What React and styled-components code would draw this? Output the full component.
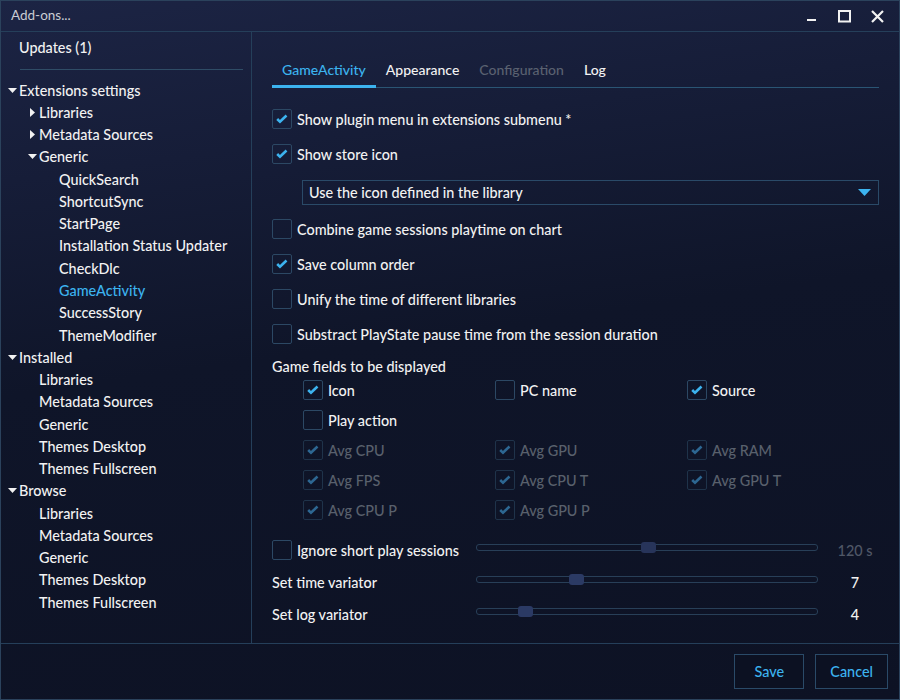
import React from "react";
import styled, { createGlobalStyle, css } from "styled-components";

const GlobalStyle = createGlobalStyle`
  html, body { margin: 0; padding: 0; background: #0d1224; }
  body { font-family: "Lato", "Open Sans", sans-serif; font-size: 14.4px; font-weight: 500; color: #f2f2f2; }
  * { box-sizing: border-box; }
`;

const BLUE = "#3cb3ef";
const LINE = "#253f5a";

const Window = styled.div`
  width: 900px;
  height: 700px;
  border: 1px solid #2b425c;
  background: linear-gradient(172deg, #1c2444 0%, #161d38 22%, #0f1529 48%, #0d1224 100%);
  display: flex;
  flex-direction: column;
  overflow: hidden;
`;

const TitleBar = styled.div`
  height: 31px;
  flex: none;
  border-bottom: 1px solid ${LINE};
  display: flex;
  align-items: center;
  padding: 0 5px 0 10px;
`;

const Title = styled.div`
  flex: 1;
  color: #c9ccd3;
  font-size: 13.5px;
  font-weight: 400;
  margin-top: -2px;
`;

const WinButton = styled.div`
  width: 33px;
  height: 30px;
  display: flex;
  align-items: center;
  justify-content: center;
`;

const Body = styled.div`
  flex: 1;
  display: flex;
  min-height: 0;
`;

const Sidebar = styled.div`
  width: 251px;
  flex: none;
  border-right: 1px solid ${LINE};
  padding-top: 5px;
`;

const Updates = styled.div`
  height: 22px;
  line-height: 22px;
  padding-left: 18px;
`;

const Separator = styled.div`
  height: 1px;
  background: #2f4c66;
  margin: 10px 8px 9px 19px;
`;

const TreeRow = styled.div`
  height: 22.27px;
  display: flex;
  align-items: center;
  padding-left: ${(p) => 7 + p.$level * 20}px;
  color: ${(p) => (p.$selected ? BLUE : "#f2f2f2")};
  white-space: nowrap;
`;

const Toggle = styled.span`
  width: 11px;
  flex: none;
  display: flex;
  align-items: center;
`;

const Main = styled.div`
  flex: 1;
  padding: 19px 20px 0 20px;
  display: flex;
  flex-direction: column;
`;

const TabBar = styled.div`
  display: flex;
  border-bottom: 1px solid #2a5574;
  height: 37px;
`;

const Tab = styled.div`
  padding: 0 10px;
  font-size: 14px;
  display: flex;
  align-items: center;
  margin-bottom: -1px;
  border-bottom: 3px solid transparent;
  padding-top: 3px;
  color: #f2f2f2;
  ${(p) =>
    p.$active &&
    css`
      color: ${BLUE};
      border-bottom-color: ${BLUE};
    `}
  ${(p) =>
    p.$disabled &&
    css`
      color: #5a6170;
    `}
`;

const Row = styled.div`
  display: flex;
  align-items: center;
  gap: 5px;
  height: 20px;
  margin-top: ${(p) => p.$mt ?? 15}px;
  color: ${(p) => (p.$disabled ? "#59606c" : "#f2f2f2")};
  white-space: nowrap;
`;

const Box = styled.span`
  width: 20px;
  height: 20px;
  flex: none;
  border: 1px solid ${(p) => (p.$disabled ? "#1f334a" : "#2c4864")};
  border-radius: 2px;
  display: flex;
  align-items: center;
  justify-content: center;
`;

const Select = styled.div`
  margin: 16px 0 0 30px;
  height: 25px;
  border: 1px solid #2a4a68;
  display: flex;
  align-items: center;
  justify-content: space-between;
  padding: 0 7px 0 6px;
`;

const SectionLabel = styled.div`
  margin-top: 13px;
  height: 20px;
  line-height: 20px;
`;

const FieldGrid = styled.div`
  display: grid;
  grid-template-columns: 192px 192px 1fr;
  row-gap: 10px;
  margin: 3px 0 0 31px;
  & > ${Row} {
    margin-top: 0;
  }
`;

const SliderRow = styled.div`
  display: flex;
  align-items: center;
  height: 20px;
  margin-top: ${(p) => p.$mt ?? 12}px;
  white-space: nowrap;
`;

const SliderLabel = styled.div`
  width: 204px;
  flex: none;
  display: flex;
  align-items: center;
  gap: 5px;
`;

const Track = styled.div`
  position: relative;
  width: 342px;
  height: 7px;
  flex: none;
  border: 1px solid #283f58;
  border-radius: 3px;
  margin-top: -5px;
`;

const Thumb = styled.div`
  position: absolute;
  top: -3px;
  width: 15px;
  height: 11px;
  margin-left: -7px;
  border-radius: 3px;
  background: ${(p) => (p.$disabled ? "#27345a" : "#2b3a64")};
`;

const SliderValue = styled.div`
  flex: 1;
  padding-left: 13px;
  text-align: center;
  color: ${(p) => (p.$disabled ? "#505766" : "#f2f2f2")};
`;

const Footer = styled.div`
  height: 56px;
  flex: none;
  border-top: 1px solid ${LINE};
  display: flex;
  align-items: center;
  justify-content: flex-end;
  gap: 11px;
  padding: 0 11px 0 0;
`;

const Button = styled.button`
  height: 35px;
  min-width: 70px;
  padding: 0 14px;
  border: 1px solid #2a4a68;
  background: #0c1122;
  color: ${BLUE};
  font-family: inherit;
  font-weight: inherit;
  font-size: 14.4px;
`;

const Check = ({ disabled }) => (
  <svg width="12" height="10" viewBox="0 0 12 10">
    <polyline
      points="1.2,5 4,7.8 10.5,1.5"
      fill="none"
      stroke={disabled ? "#2d6792" : BLUE}
      strokeWidth="2.6"
      strokeLinecap="butt"
      strokeLinejoin="miter"
    />
  </svg>
);

const CheckBox = ({ checked, disabled }) => (
  <Box $disabled={disabled}>{checked && <Check disabled={disabled} />}</Box>
);

const Arrow = ({ dir }) =>
  dir === "down" ? (
    <svg width="9" height="5" viewBox="0 0 9 5">
      <polygon points="0,0 9,0 4.5,5" fill="#f2f2f2" />
    </svg>
  ) : (
    <svg width="8" height="9" viewBox="0 0 8 9" style={{ display: "block" }}>
      <polygon points="2,0 7,4.5 2,9" fill="#f2f2f2" />
    </svg>
  );

const tree = [
  { l: 0, t: "Extensions settings", a: "down" },
  { l: 1, t: "Libraries", a: "right" },
  { l: 1, t: "Metadata Sources", a: "right" },
  { l: 1, t: "Generic", a: "down" },
  { l: 2, t: "QuickSearch" },
  { l: 2, t: "ShortcutSync" },
  { l: 2, t: "StartPage" },
  { l: 2, t: "Installation Status Updater" },
  { l: 2, t: "CheckDlc" },
  { l: 2, t: "GameActivity", s: true },
  { l: 2, t: "SuccessStory" },
  { l: 2, t: "ThemeModifier" },
  { l: 0, t: "Installed", a: "down" },
  { l: 1, t: "Libraries" },
  { l: 1, t: "Metadata Sources" },
  { l: 1, t: "Generic" },
  { l: 1, t: "Themes Desktop" },
  { l: 1, t: "Themes Fullscreen" },
  { l: 0, t: "Browse", a: "down" },
  { l: 1, t: "Libraries" },
  { l: 1, t: "Metadata Sources" },
  { l: 1, t: "Generic" },
  { l: 1, t: "Themes Desktop" },
  { l: 1, t: "Themes Fullscreen" },
];

const options = [
  { t: "Combine game sessions playtime on chart", c: false, mt: 14 },
  { t: "Save column order", c: true },
  { t: "Unify the time of different libraries", c: false },
  { t: "Substract PlayState pause time from the session duration", c: false },
];

const fields = [
  { t: "Icon", c: true },
  { t: "PC name", c: false },
  { t: "Source", c: true },
  { t: "Play action", c: false },
  null,
  null,
  { t: "Avg CPU", c: true, d: true },
  { t: "Avg GPU", c: true, d: true },
  { t: "Avg RAM", c: true, d: true },
  { t: "Avg FPS", c: true, d: true },
  { t: "Avg CPU T", c: true, d: true },
  { t: "Avg GPU T", c: true, d: true },
  { t: "Avg CPU P", c: true, d: true },
  { t: "Avg GPU P", c: true, d: true },
];

const sliders = [
  { t: "Ignore short play sessions", box: true, v: "120 s", p: 50.3, d: true, mt: 20 },
  { t: "Set time variator", v: "7", p: 29.2 },
  { t: "Set log variator", v: "4", p: 14 },
];

export default function App() {
  return (
    <>
      <GlobalStyle />
      <Window>
        <TitleBar>
          <Title>Add-ons...</Title>
          <WinButton>
            <svg width="10" height="20" viewBox="0 0 10 20">
              <rect x="0" y="13" width="9" height="2" fill="#f2f2f2" />
            </svg>
          </WinButton>
          <WinButton>
            <svg width="13" height="13" viewBox="0 0 13 13">
              <rect x="1" y="1" width="11" height="10.5" fill="none" stroke="#f2f2f2" strokeWidth="2" />
            </svg>
          </WinButton>
          <WinButton>
            <svg width="13" height="13" viewBox="0 0 13 13">
              <path d="M1 1 L12 12 M12 1 L1 12" stroke="#f2f2f2" strokeWidth="2.2" />
            </svg>
          </WinButton>
        </TitleBar>
        <Body>
          <Sidebar>
            <Updates>Updates (1)</Updates>
            <Separator />
            {tree.map((r, i) => (
              <TreeRow key={i} $level={r.l} $selected={r.s}>
                <Toggle>{r.a && <Arrow dir={r.a} />}</Toggle>
                {r.t}
              </TreeRow>
            ))}
          </Sidebar>
          <Main>
            <TabBar>
              <Tab $active>GameActivity</Tab>
              <Tab>Appearance</Tab>
              <Tab $disabled>Configuration</Tab>
              <Tab>Log</Tab>
            </TabBar>
            <Row $mt={21}>
              <CheckBox checked />
              Show plugin menu in extensions submenu *
            </Row>
            <Row>
              <CheckBox checked />
              Show store icon
            </Row>
            <Select>
              <span>Use the icon defined in the library</span>
              <svg width="13" height="7" viewBox="0 0 13 7">
                <polygon points="0,0 13,0 6.5,7" fill={BLUE} />
              </svg>
            </Select>
            {options.map((o, i) => (
              <Row key={i} $mt={o.mt}>
                <CheckBox checked={o.c} />
                {o.t}
              </Row>
            ))}
            <SectionLabel>Game fields to be displayed</SectionLabel>
            <FieldGrid>
              {fields.map((f, i) =>
                f ? (
                  <Row key={i} $disabled={f.d}>
                    <CheckBox checked={f.c} disabled={f.d} />
                    {f.t}
                  </Row>
                ) : (
                  <span key={i} />
                )
              )}
            </FieldGrid>
            {sliders.map((s, i) => (
              <SliderRow key={i} $mt={s.mt}>
                <SliderLabel>
                  {s.box && <CheckBox />}
                  {s.t}
                </SliderLabel>
                <Track>
                  <Thumb style={{ left: `${s.p}%` }} $disabled={s.d} />
                </Track>
                <SliderValue $disabled={s.d}>{s.v}</SliderValue>
              </SliderRow>
            ))}
          </Main>
        </Body>
        <Footer>
          <Button>Save</Button>
          <Button>Cancel</Button>
        </Footer>
      </Window>
    </>
  );
}
